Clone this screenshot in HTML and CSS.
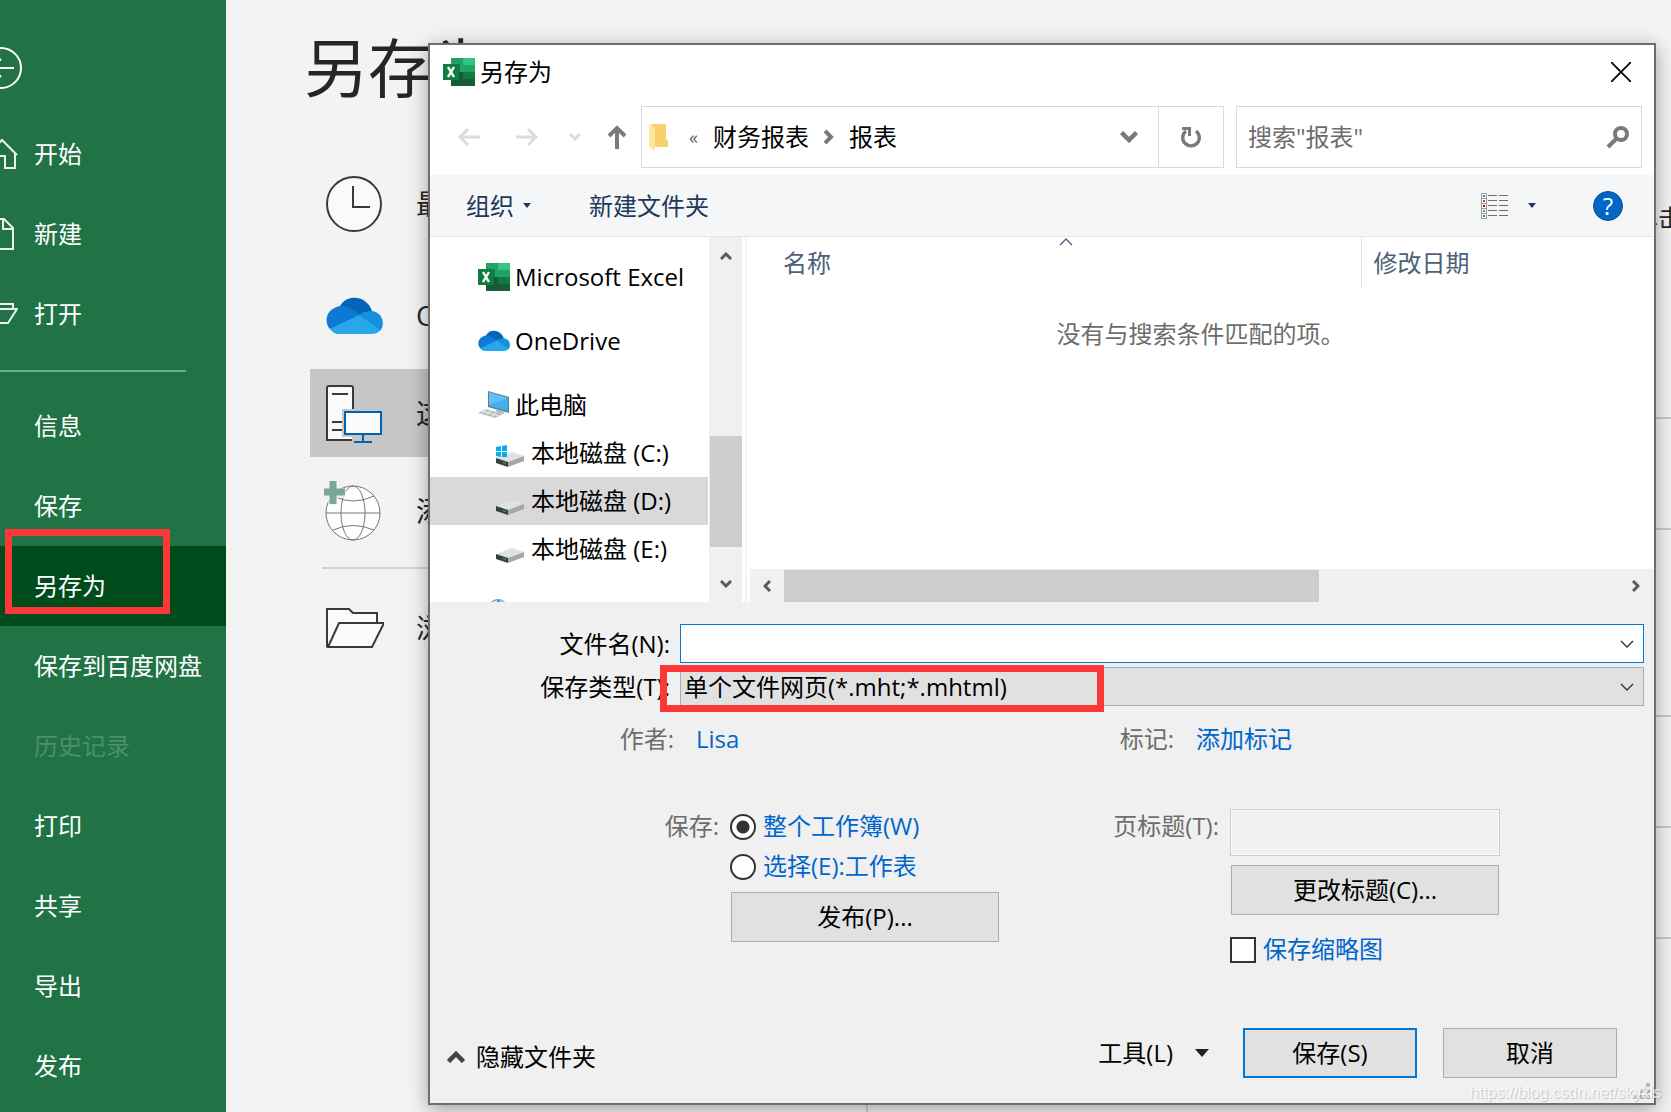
FILE: index.html
```
<!DOCTYPE html>
<html lang="zh-CN">
<head>
  <meta charset="UTF-8">
  <meta name="viewport" content="width=device-width, initial-scale=1.0">
  <title>另存为</title>
  <link rel="stylesheet" href="styles.css">
</head>
<body>
  <!-- Shared icons -->
  <svg class="defs" aria-hidden="true">
    <symbol id="excel" viewBox="0 0 32 28">
      <path fill="#21a366" d="M8 0h12v7H8z"/>
      <path fill="#33c481" d="M20 0h12v7H20z"/>
      <path fill="#107c41" d="M8 7h12v7H8z"/>
      <path fill="#21a366" d="M20 7h12v7H20zM8 5h12v9H8z"/>
      <path fill="#107c41" d="M20 14h12v7H20z"/>
      <path fill="#185c37" d="M8 14h12v7h12v7H8z"/>
      <path fill="#0b5a30" d="M8 6h9v18H8z" opacity=".5"/>
      <path fill="#107c41" d="M0 6h16v16H0z"/>
      <path fill="none" stroke="#fff" stroke-width="2.4" d="M5 9l6 10M11 9L5 19"/>
    </symbol>
    <symbol id="cloud" viewBox="0 0 57 38">
      <path fill="#0364b8" d="M14 9C19 1 26 0 31 1c8 1 13 7 15 13L33 22z"/>
      <path fill="#0f78d4" d="M14 9c5-1 8 1 11 3l20 12L4 32C-2 26-1 12 14 9z"/>
      <path fill="#1490df" d="M33 18c4-3 8-4 13-4 10 1 14 13 8 20L30 24z"/>
      <path fill="#28a8ea" d="M4 32l29-14 21 15c-2 3-5 4-8 4H13c-4 0-7-2-9-5z"/>
    </symbol>
    <symbol id="disk" viewBox="0 0 28 16">
      <path fill="#dfe1e5" d="M0 7L16 1l12 4-16 6z"/>
      <path fill="#a5a7aa" d="M12 11l16-6v5l-16 6z"/>
      <path fill="#3c3f41" d="M0 7l12 4v5L0 12z"/>
      <path fill="#35c04a" d="M7 11l3 1v1l-3-1z"/>
    </symbol>
    <symbol id="chevron" viewBox="0 0 12 8">
      <path fill="none" stroke="currentColor" stroke-width="3" d="M1 1l5 5 5-5"/>
    </symbol>
    <symbol id="thin-chevron" viewBox="0 0 14 8">
      <path fill="none" stroke="currentColor" stroke-width="1.4" d="M1 1l6 6 6-6"/>
    </symbol>
    <symbol id="caret" viewBox="0 0 8 5">
      <path fill="currentColor" d="M0 0h8L4 5z"/>
    </symbol>
  </svg>

  <nav class="sidebar">
    <button class="back" aria-label="返回">
      <svg width="24" height="44" viewBox="0 0 24 44" fill="none" stroke="#fff" stroke-width="2"><circle cx="1" cy="22" r="20"/><path d="M14 22H-8M1 13l-9 9 9 9"/></svg>
    </button>
    <a href="#" class="menu-item with-icon">
      <svg width="18" height="34" viewBox="0 0 18 34" fill="none" stroke="#f0f0f0" stroke-width="2"><path d="M-12 17L2 3l15 15M15 16v15H5V19h-8"/></svg>开始</a>
    <a href="#" class="menu-item with-icon">
      <svg width="18" height="34" viewBox="0 0 18 34" fill="none" stroke="#f0f0f0" stroke-width="2"><path d="M-5 2h9l9 9v21H-5M3 2v10h10"/></svg>新建</a>
    <a href="#" class="menu-item with-icon">
      <svg width="18" height="34" viewBox="0 0 18 34" fill="none" stroke="#f0f0f0" stroke-width="2"><path d="M-5 7h18v5M-5 12h22L8 26H-5"/></svg>打开</a>
    <hr class="menu-line">
    <a href="#" class="menu-item">信息</a>
    <a href="#" class="menu-item">保存</a>
    <a href="#" class="menu-item active">另存为<span class="mark mark-menu"></span></a>
    <a href="#" class="menu-item">保存到百度网盘</a>
    <a href="#" class="menu-item disabled">历史记录</a>
    <a href="#" class="menu-item">打印</a>
    <a href="#" class="menu-item">共享</a>
    <a href="#" class="menu-item">导出</a>
    <a href="#" class="menu-item">发布</a>
  </nav>

  <main class="backstage">
    <section class="places">
      <h1>另存为</h1>
      <a href="#" class="place recent">
        <svg width="60" height="60" viewBox="0 0 60 60" fill="none" stroke="#3b3a39" stroke-width="2"><circle cx="30" cy="30" r="27" fill="#fafafa"/><path d="M29 12v21h17"/></svg>最</a>
      <a href="#" class="place">
        <svg width="60" height="60" viewBox="0 0 60 60"><use href="#cloud" x="2" y="12" width="57" height="38"/></svg>O</a>
      <a href="#" class="place selected">
        <svg width="60" height="60" viewBox="0 0 60 60" fill="#fafafa" stroke="#3b3a39" stroke-width="2"><path d="M28 57H3V5q0-2 2-2h22q2 0 2 2v24"/><path d="M8 11h16M8 39h12M8 47h12"/><path fill="#c6c6c6" stroke="none" d="M18 26h42v28H18z"/><g stroke="#0063b1"><path d="M21 29h36v22H21z"/><path fill="none" d="M39 51v7M30 59h18"/></g></svg>这</a>
      <a href="#" class="place">
        <svg width="60" height="60" viewBox="0 0 60 60" fill="none" stroke="#767676" stroke-width="1"><circle cx="29" cy="32" r="27" fill="#fff"/><ellipse cx="29" cy="32" rx="12" ry="27"/><path d="M2 32h54M9 15q20 10 41 0M9 49q20-9 41 0"/><path stroke="#f3f3f3" stroke-width="9" d="M9 0v24M-2 12h24"/><path stroke="#79a898" stroke-width="7" d="M9 0v23M-2 11h23"/></svg>添</a>
      <hr class="place-line">
      <a href="#" class="place">
        <svg width="60" height="60" viewBox="0 0 60 60" fill="#fafafa" stroke="#3b3a39" stroke-width="2"><path d="M3 49V11h22l4 4h24v12"/><path d="M4 49l11-24h45L48 49z"/></svg>浏</a>
    </section>
    <section class="folders">
      <p class="folders-tip">单击</p>
      <div class="folder-row"></div>
      <div class="folder-row"></div>
      <div class="folder-group"></div>
      <div class="folder-row"></div>
      <div class="folder-row"></div>
    </section>
  </main>

  <div class="dialog" role="dialog" aria-labelledby="dialog-title">
    <header class="titlebar">
      <svg width="32" height="28"><use href="#excel"/></svg>
      <h2 id="dialog-title">另存为</h2>
      <button class="close" aria-label="关闭">
        <svg width="20" height="20" viewBox="0 0 20 20" stroke="#000" stroke-width="1.8"><path d="M0 0l20 20M20 0L0 20"/></svg>
      </button>
    </header>

    <div class="navbar">
      <div class="nav-buttons">
        <button class="nav-back" aria-label="后退"><svg width="24" height="20" viewBox="0 0 24 20" fill="none" stroke="#dcdcdc" stroke-width="3"><path d="M23 10H3M11 2l-8 8 8 8"/></svg></button>
        <button aria-label="前进"><svg width="24" height="20" viewBox="0 0 24 20" fill="none" stroke="#dcdcdc" stroke-width="3"><path d="M1 10h20M13 2l8 8-8 8"/></svg></button>
        <button class="faint" aria-label="最近位置"><svg width="12" height="8"><use href="#chevron"/></svg></button>
        <button aria-label="上移"><svg width="20" height="24" viewBox="0 0 20 24" fill="none" stroke="#7a7a7a" stroke-width="4"><path d="M10 24V3M2 11l8-8 8 8"/></svg></button>
      </div>
      <div class="address">
        <svg width="20" height="28" viewBox="0 0 20 28"><path fill="#f6d26f" d="M2 1h15v15l2 1v7H6z"/><path fill="#ffe69b" d="M0 1l6 4v23l-6-4z"/></svg>
        <span class="crumb-more">«</span>
        <a href="#">财务报表</a>
        <svg class="crumb-arrow" width="10" height="16" viewBox="0 0 10 16" fill="none" stroke="#7a7a7a" stroke-width="4"><path d="M1 2l6 6-6 6"/></svg>
        <a href="#">报表</a>
        <button class="address-drop" aria-label="以前的位置"><svg width="18" height="12"><use href="#chevron"/></svg></button>
        <button class="refresh" aria-label="刷新"><svg width="22" height="22" viewBox="0 0 22 22" fill="none" stroke="#7a7a7a"><path stroke-width="3.4" d="M16 5a8.300 8.300 0 1 1-10 0"/><path fill="#7a7a7a" stroke="none" d="M2 1h9v9H8V4H2z"/></svg></button>
      </div>
      <div class="search">
        <input type="text" placeholder='搜索"报表"' aria-label="搜索">
        <svg width="24" height="24" viewBox="0 0 24 24" fill="none" stroke="#7a7a7a" stroke-width="4"><circle cx="15" cy="9" r="6"/><path d="M11 13L2 22"/></svg>
      </div>
    </div>

    <div class="toolbar">
      <button class="organize">组织<svg width="8" height="5"><use href="#caret"/></svg></button>
      <button>新建文件夹</button>
      <button class="view" aria-label="更改视图">
        <svg width="28" height="26" viewBox="0 0 28 26" fill="none"><path fill="#fff" stroke="#999" d="M.5.5h5v25h-5zM.5 5.500h5M.5 10.500h5M.5 15.500h5M.5 20.500h5"/><path stroke="#6e6e6e" d="M7 2.500h9m2 0h9M7 7.500h9m2 0h9M7 12.500h9m2 0h9M7 17.500h9m2 0h9M7 22.500h9m2 0h9"/><path fill="#3a78b5" d="M2 2h2v2H2zM2 22h2v2H2z"/><path fill="#a0522d" d="M2 7h2v2H2z"/><path fill="#c00" d="M2 12h2v2H2z"/><path fill="#8a9a3a" d="M2 17h2v2H2z"/></svg>
        <svg width="8" height="5"><use href="#caret"/></svg>
      </button>
      <button class="help" aria-label="帮助">?</button>
    </div>

    <div class="browser">
      <div class="tree">
        <a href="#" class="node"><svg width="32" height="28"><use href="#excel"/></svg>Microsoft Excel</a>
        <a href="#" class="node"><svg width="32" height="22"><use href="#cloud"/></svg>OneDrive</a>
        <a href="#" class="node pc">
          <svg width="32" height="28" viewBox="0 0 32 28"><path fill="#6b7a86" d="M10 0l21 6v16l-21-6z"/><path fill="#40b0f5" d="M11 1l19 6v13l-19-5z"/><path fill="#7fd0ff" d="M11 1l19 6-19 7z" opacity=".5"/><path fill="#b8bec3" d="M18 18l7 2 2 3-9-1zM0 22l8-4 17 5-8 4z"/><path stroke="#fff" stroke-width=".7" d="M4 20l17 5M8 18L3 24M14 19l-6 5M19 21l-6 5"/></svg>此电脑</a>
        <a href="#" class="node child"><svg width="28" height="22" viewBox="0 0 28 22"><use href="#disk" y="6" width="28" height="16"/><path fill="#00b0ee" d="M0 2l5-1v5H0zM6 1l5-1v6H6zM0 7h5v5l-5-1zM6 7h5v5H6z"/></svg>本地磁盘 (C:)</a>
        <a href="#" class="node child current"><svg width="28" height="22" viewBox="0 0 28 22"><use href="#disk" y="6" width="28" height="16"/></svg>本地磁盘 (D:)</a>
        <a href="#" class="node child"><svg width="28" height="22" viewBox="0 0 28 22"><use href="#disk" y="6" width="28" height="16"/></svg>本地磁盘 (E:)</a>
        <a href="#" class="node network" aria-label="网络"><svg width="32" height="28" viewBox="0 0 32 28"><circle cx="20" cy="10" r="10" fill="#4f9fc0"/><path fill="#cfe8f2" d="M14 3l5-2v4zM22 1l4 2-3 2z"/></svg></a>
      </div>
      <div class="scroll-y">
        <svg class="flip" width="12" height="8"><use href="#chevron"/></svg>
        <div class="thumb-y"></div>
        <svg width="12" height="8"><use href="#chevron"/></svg>
      </div>
      <div class="files">
        <table>
          <thead>
            <tr>
              <th class="col-name">名称<svg class="sort flip" width="14" height="8"><use href="#thin-chevron"/></svg></th>
              <th class="col-date">修改日期</th>
            </tr>
          </thead>
          <tbody>
            <tr><td colspan="2">没有与搜索条件匹配的项。</td></tr>
          </tbody>
        </table>
        <div class="scroll-x">
          <svg width="8" height="12" viewBox="0 0 8 12" fill="none" stroke="#5a5a5a" stroke-width="3"><path d="M7 1L2 6l5 5"/></svg>
          <div class="thumb-x"></div>
          <svg width="8" height="12" viewBox="0 0 8 12" fill="none" stroke="#5a5a5a" stroke-width="3"><path d="M1 1l5 5-5 5"/></svg>
        </div>
      </div>
    </div>

    <form class="save-form">
      <div class="field">
        <label for="file-name">文件名(N):</label>
        <div class="combo">
          <input type="text" id="file-name">
          <svg width="14" height="8"><use href="#thin-chevron"/></svg>
        </div>
      </div>
      <div class="field">
        <label for="file-type">保存类型(T):</label>
        <div class="combo">
          <select id="file-type"><option>单个文件网页(*.mht;*.mhtml)</option></select>
          <svg width="14" height="8"><use href="#thin-chevron"/></svg>
        </div>
        <span class="mark mark-type"></span>
      </div>

      <div class="meta">
        <div class="pair author"><span>作者:</span><a href="#">Lisa</a></div>
        <div class="pair tags"><span>标记:</span><a href="#">添加标记</a></div>
      </div>

      <div class="options">
        <div class="option-group scope">
          <span class="option-label">保存:</span>
          <div class="option-body">
            <label class="choice"><input type="radio" name="scope" checked>整个工作簿(W)</label>
            <label class="choice"><input type="radio" name="scope">选择(E):工作表</label>
            <button type="button" class="btn wide">发布(P)...</button>
          </div>
        </div>
        <div class="option-group page">
          <label class="option-label" for="page-title">页标题(T):</label>
          <div class="option-body">
            <input type="text" id="page-title" disabled>
            <button type="button" class="btn wide">更改标题(C)...</button>
            <label class="choice"><input type="checkbox">保存缩略图</label>
          </div>
        </div>
      </div>

      <footer class="actions">
        <button type="button" class="hide-folders"><svg class="flip" width="18" height="12" color="#444"><use href="#chevron"/></svg>隐藏文件夹</button>
        <button type="button" class="tools">工具(L)<svg width="14" height="8" viewBox="0 0 14 8"><path d="M0 0h14L7 8z" fill="#222"/></svg></button>
        <button type="button" class="btn primary">保存(S)</button>
        <button type="button" class="btn">取消</button>
      </footer>
    </form>
    <svg class="grip" width="16" height="16" viewBox="0 0 16 16" fill="#b8b8b8"><path d="M12 0h4v4h-4zM6 6h4v4H6zM12 6h4v4h-4zM0 12h4v4H0zM6 12h4v4H6zM12 12h4v4h-4z"/></svg>
  </div>

  <span class="watermark">https://blog.csdn.net/skykls</span>
</body>
</html>
```
FILE: styles.css
```
* {
  box-sizing: border-box;
}
body {
  margin: 0;
  height: 100vh;
  overflow: hidden;
  display: flex;
  position: relative;
  background-color: #f3f3f3;
  color: #000;
  font-family: "Open Sans", "Noto Sans CJK SC", sans-serif;
  font-size: 24px;
  line-height: 32px;
}
a {
  color: inherit;
  text-decoration: none;
}
button,
input,
select {
  font: inherit;
  color: inherit;
}
button {
  background: none;
  border: none;
  padding: 0;
}
svg {
  flex: none;
}
.defs {
  position: absolute;
  width: 0;
  height: 0;
}
.flip {
  transform: rotate(180deg);
}

/* Green menu on the left */
.sidebar {
  width: 226px;
  flex: none;
  background-color: #217346;
  color: #fff;
  padding-top: 46px;
}
.back {
  display: block;
  height: 68px;
}
.back svg {
  display: block;
  margin-bottom: 24px;
}
.menu-item {
  display: flex;
  align-items: center;
  height: 80px;
  padding-left: 34px;
  position: relative;
}
.menu-item.with-icon {
  padding-left: 0;
  gap: 16px;
}
.menu-item.active {
  background-color: #004b1c;
}
.menu-item.disabled {
  color: #4d8f6a;
}
.menu-line {
  width: 186px;
  height: 2px;
  margin: 16px 0 14px;
  border: none;
  background-color: #6ab187;
}

/* Red frames around the important places */
.mark {
  position: absolute;
  border: 7px solid #fc3737;
}
.mark-menu {
  left: 5px;
  top: -17px;
  width: 165px;
  height: 85px;
}
.mark-type {
  left: 230px;
  top: -2px;
  width: 444px;
  height: 47px;
}

/* Save-as page behind the dialog */
.backstage {
  flex: 1;
  display: flex;
  color: #262626;
}
.places {
  width: 640px;
  flex: none;
  padding: 20px 0 0 84px;
}
.places h1 {
  margin: 0 0 44px -6px;
  font-size: 64px;
  font-weight: 400;
  line-height: 96px;
}
.place {
  display: flex;
  align-items: center;
  gap: 32px;
  height: 88px;
  margin-bottom: 10px;
  padding-left: 14px;
  font-size: 28px;
}
.place.recent {
  margin-bottom: 23px;
}
.place.selected {
  background-color: #c6c6c6;
}
.place-line {
  height: 2px;
  margin: 12px 0 15px 12px;
  border: none;
  background-color: #d2d2d2;
}
.folders {
  flex: 1;
  margin-top: 100px;
  padding-top: 102px;
  border-left: 2px solid #d2d2d2;
}
.folders-tip {
  margin: 0 -11px 0 0;
  height: 106px;
  text-align: right;
}
.folder-row {
  height: 111px;
  border-bottom: 2px solid #c8c8c8;
}
.folder-group {
  height: 187px;
  border-bottom: 2px solid #c8c8c8;
}

/* Dialog window */
.dialog {
  position: absolute;
  top: 43px;
  right: 15px;
  bottom: 7px;
  left: 428px;
  display: flex;
  flex-direction: column;
  border: 2px solid #6e6e6e;
  background-color: #fff;
  box-shadow: 0 4px 18px rgba(0, 0, 0, 0.35);
}
.titlebar {
  display: flex;
  align-items: center;
  gap: 5px;
  height: 54px;
  padding: 0 23px 0 13px;
}
.titlebar h2 {
  margin: 0;
  font-size: 24px;
  font-weight: 400;
}
.close {
  margin-left: auto;
  display: flex;
}
.navbar {
  display: flex;
  gap: 12px;
  height: 76px;
  padding: 7px 12px 7px 27px;
}
.nav-buttons {
  display: flex;
  align-items: center;
  gap: 26px;
  margin-right: 2px;
}
.nav-buttons button {
  display: flex;
}
.nav-buttons .nav-back {
  margin-right: 8px;
}
.nav-buttons .faint {
  color: #dcdcdc;
  margin-left: 4px;
}
.address,
.search {
  display: flex;
  align-items: center;
  border: 1px solid #d9d9d9;
}
.address {
  flex: 1;
  padding-left: 7px;
  color: #000;
}
.crumb-more {
  margin: 0 15px 0 20px;
  font-size: 18px;
  color: #666;
}
.crumb-arrow {
  margin: 0 15px;
}
.address-drop {
  margin-left: auto;
  padding: 0 20px;
  color: #7a7a7a;
}
.address-drop svg,
.refresh svg {
  display: block;
  margin: auto;
}
.refresh {
  width: 65px;
  align-self: stretch;
  border-left: 1px solid #d9d9d9;
}
.search {
  flex: 0 1 406px;
  padding: 0 11px;
}
.search input {
  flex: 1;
  min-width: 0;
  border: none;
  padding: 0;
  outline: none;
  background: none;
}
.search input::placeholder {
  color: #6d6d6d;
  opacity: 1;
}
.toolbar {
  display: flex;
  align-items: center;
  height: 62px;
  padding: 0 31px 0 36px;
  background-color: #f4f6f8;
  border-bottom: 1px solid #e5e7ea;
  color: #1e395b;
}
.organize {
  display: flex;
  align-items: center;
  gap: 9px;
  margin-right: 58px;
}
.view {
  display: flex;
  align-items: center;
  gap: 19px;
  margin-left: auto;
}
.help {
  width: 30px;
  height: 30px;
  margin-left: 57px;
  border: 1px solid #1b4f86;
  border-radius: 50%;
  background-color: #0067c8;
  color: #fff;
  line-height: 28px;
}

/* Folder tree and file list */
.browser {
  display: flex;
  height: 365px;
}
.tree {
  width: 279px;
  padding: 16px 1px 0 0;
  overflow: hidden;
}
.node {
  display: flex;
  align-items: center;
  gap: 5px;
  height: 48px;
  margin-bottom: 16px;
  padding-left: 48px;
  white-space: nowrap;
}
.node.pc,
.node.child {
  margin-bottom: 0;
}
.node.child {
  gap: 7px;
  padding-left: 66px;
}
.node.child svg {
  margin-top: 5px;
}
.node.current {
  background-color: #d9d9d9;
}
.node.network {
  margin-top: 16px;
}
.scroll-y {
  display: flex;
  flex-direction: column;
  align-items: center;
  width: 33px;
  padding: 15px 0 14px;
  background-color: #f0f0f0;
  color: #5a5a5a;
}
.thumb-y {
  width: 32px;
  height: 111px;
  margin-top: 176px;
  margin-bottom: auto;
  background-color: #cdcdcd;
}
.files {
  flex: 1;
  display: flex;
  flex-direction: column;
  margin-left: 3px;
  border-left: 2px solid #f5f5f5;
}
table {
  width: 100%;
  border-collapse: collapse;
  table-layout: fixed;
}
th {
  height: 51px;
  padding: 0 12px;
  text-align: left;
  font-weight: 400;
  color: #4c607a;
}
.col-name {
  position: relative;
  padding-left: 36px;
  border-right: 1px solid #e0e3e7;
}
.col-date {
  width: 293px;
}
.sort {
  position: absolute;
  top: 1px;
  left: 312px;
}
td {
  padding: 30px 0 0;
  text-align: center;
  color: #6d6d6d;
}
.scroll-x {
  display: flex;
  align-items: center;
  height: 33px;
  margin-top: auto;
  margin-left: 3px;
  padding: 0 14px 0 13px;
  background-color: #f0f0f0;
}
.thumb-x {
  width: 61%;
  height: 32px;
  margin-left: 13px;
  margin-right: auto;
  background-color: #cdcdcd;
}

/* Fields under the list */
.save-form {
  flex: 1;
  display: flex;
  flex-direction: column;
  padding-top: 22px;
  background-color: #f0f0f0;
}
.field {
  display: flex;
  align-items: center;
  position: relative;
  margin-bottom: 4px;
  padding-right: 10px;
}
.field label {
  width: 250px;
  padding-right: 10px;
  text-align: right;
}
.combo {
  flex: 1;
  position: relative;
  display: flex;
}
.combo input,
.combo select {
  width: 100%;
  height: 39px;
  padding: 0 3px;
  border: 1px solid #adadad;
  border-radius: 0;
  appearance: none;
  outline: none;
  background-color: #e1e1e1;
}
.combo input {
  border-color: #0078d7;
  background-color: #fff;
}
.combo svg {
  position: absolute;
  right: 10px;
  top: 16px;
  color: #333;
}
.meta,
.options {
  display: grid;
  grid-template-columns: 1fr 1fr;
}
.meta {
  margin-top: 13px;
}
.pair {
  display: flex;
  gap: 22px;
}
.pair span,
.option-label {
  color: #6d6d6d;
  text-align: right;
}
.pair a,
.choice {
  color: #0066cc;
}
.author span {
  width: 244px;
}
.tags span {
  width: 132px;
}
.options {
  margin-top: 51px;
}
.option-group {
  display: flex;
  gap: 11px;
}
.option-label {
  line-height: 40px;
}
.scope .option-label {
  width: 289px;
}
.page .option-label {
  width: 177px;
}
.option-body {
  display: flex;
  flex-direction: column;
  align-items: flex-start;
}
.choice {
  display: flex;
  align-items: center;
  gap: 7px;
  height: 40px;
}
.choice input {
  appearance: none;
  width: 26px;
  height: 26px;
  margin: 2px 0 0;
  border: 2px solid #333;
  background-color: #fff;
}
.choice input[type="radio"] {
  border-radius: 50%;
}
.choice input[type="radio"]:checked {
  background-image: radial-gradient(circle, #333 6px, #fff 7px);
}
.btn {
  width: 174px;
  height: 50px;
  border: 1px solid #adadad;
  background-color: #e1e1e1;
}
.btn.wide {
  width: 268px;
  margin-left: 1px;
}
.btn.primary {
  border: 2px solid #0078d7;
}
.scope .btn {
  margin-top: 6px;
}
#page-title {
  width: 270px;
  height: 47px;
  margin: 3px 0 9px;
  border: 1px solid #ccc;
  background-color: #f0f0f0;
  box-shadow: inset 0 0 0 1px #fafafa;
}
.page .choice {
  margin-top: 14px;
}
.actions {
  display: flex;
  align-items: center;
  gap: 26px;
  margin-top: auto;
  padding: 0 37px 25px 17px;
}
.hide-folders {
  display: flex;
  align-items: center;
  gap: 11px;
  margin-right: auto;
  padding-top: 8px;
  color: #000;
}
.tools {
  display: flex;
  align-items: center;
  gap: 22px;
  margin-right: 8px;
}
.grip {
  position: absolute;
  right: 4px;
  bottom: 4px;
}
.watermark {
  position: absolute;
  right: 10px;
  bottom: 9px;
  font-family: "Liberation Sans", Arial, sans-serif;
  font-size: 16px;
  line-height: 20px;
  color: rgba(255, 255, 255, 0.8);
  text-shadow: 1px 1px 1px rgba(0, 0, 0, 0.2);
}
```
